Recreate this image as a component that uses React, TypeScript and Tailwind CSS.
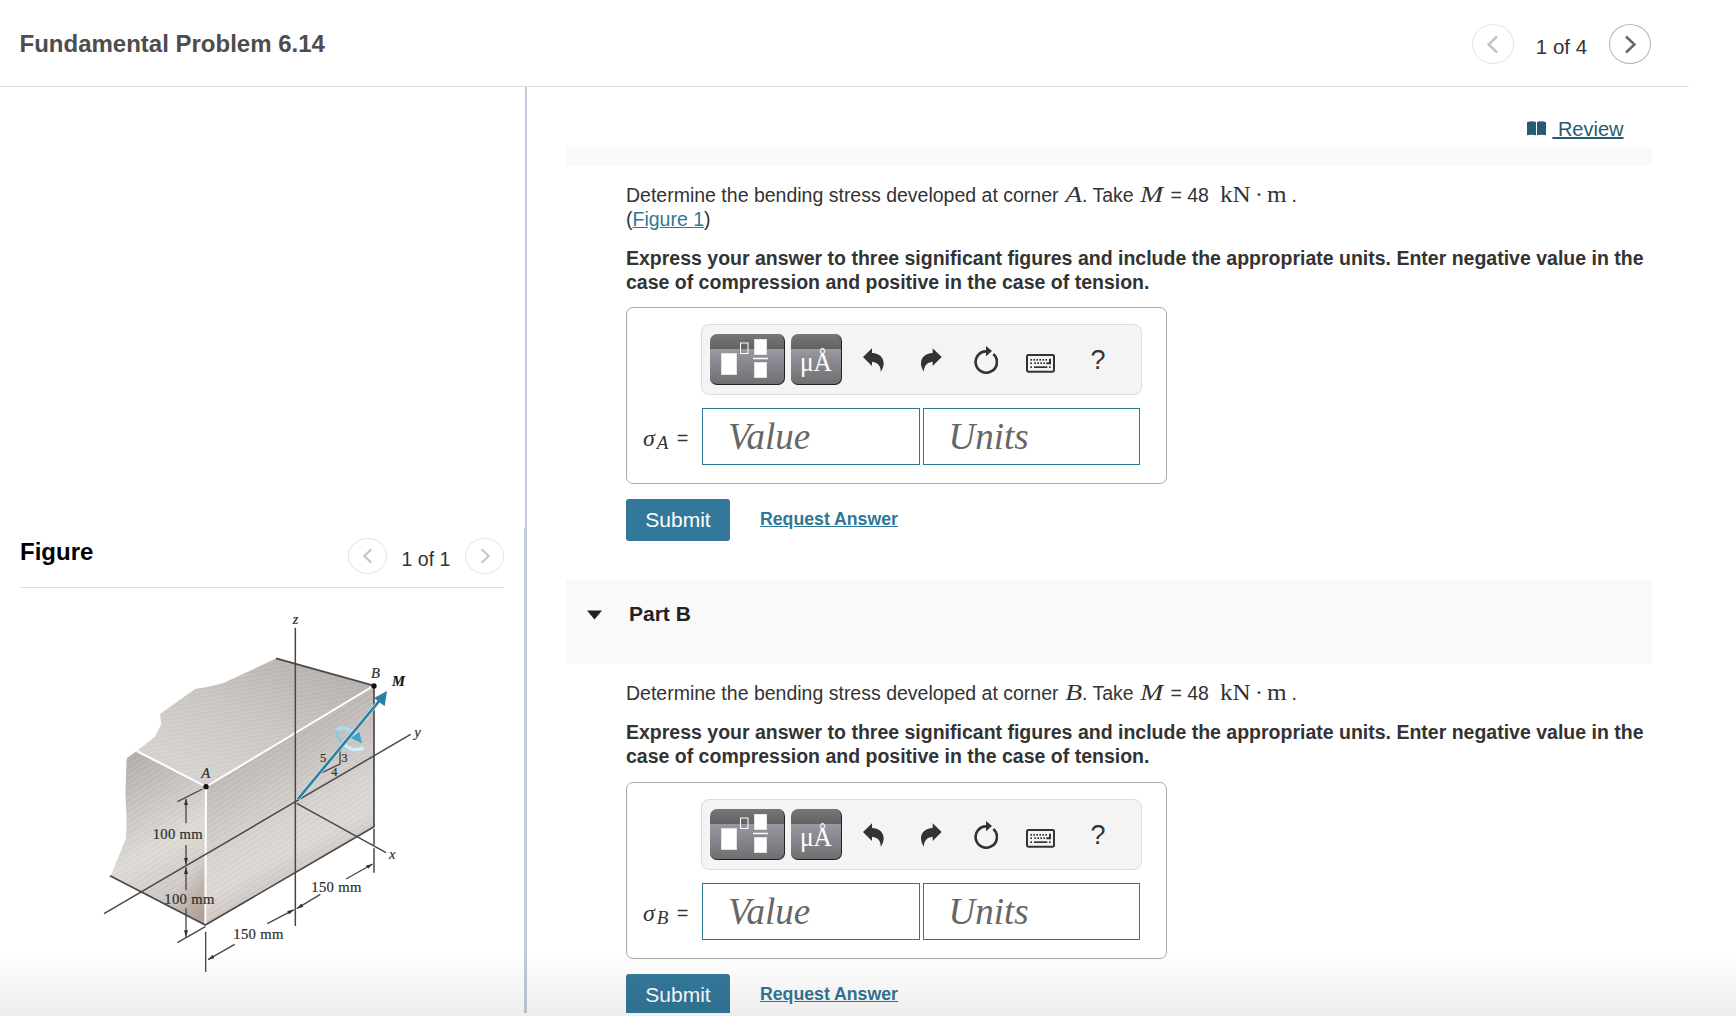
import { ReactNode } from 'react';

interface PartProps {
  corner: string;
  figureLink?: boolean;
}

interface PagerButtonProps {
  direction: 'prev' | 'next';
  active?: boolean;
  small?: boolean;
}

function PagerButton({ direction, active, small }: PagerButtonProps) {
  return (
    <button
      className={`flex items-center justify-center rounded-[50%] border ${
        small ? 'h-9 w-[39px]' : 'h-10 w-[42px]'
      } ${active ? 'border-[#b5b5b5] text-[#666]' : 'border-[#e6e6e6] text-[#c4c4c4]'}`}
    >
      <svg width={small ? 10 : 12} height={small ? 18 : 19} viewBox="0 0 12 19" fill="none" stroke="currentColor" strokeWidth="2.5">
        {direction === 'prev' ? <path d="M10 1.500 1.500 9.500l8.500 8" /> : <path d="M2 1.500 10.500 9.500l-8.500 8" />}
      </svg>
    </button>
  );
}

function MathText({ children, className = '' }: { children: ReactNode; className?: string }) {
  return (
    <span className={`inline-block font-['Liberation_Serif',serif] text-[24px] leading-[0] ${className}`}>{children}</span>
  );
}

function BookIcon() {
  return (
    <svg width="19" height="15" viewBox="0 0 19 15" fill="#255c71">
      <path d="M0 1.2C2.5-.1 6.500-.1 9 1v13.300c-2.500-.9-6.500-.9-9 0z" />
      <path d="M10 1c2.500-1.100 6.500-1.100 9 .2v13.100c-2.500-.9-6.500-.9-9 0z" />
    </svg>
  );
}

function UndoIcon() {
  return (
    <svg width="21" height="24" viewBox="0 0 63 72" fill="#333">
      <path d="M0 27 27 1v14c23 1 36 15 35 33-1 10-4 17-9 23 1-14-6-28-26-30v13z" />
    </svg>
  );
}

function RedoIcon() {
  return (
    <svg width="21" height="24" viewBox="0 0 63 72" fill="#333">
      <path d="M62 27 35 1v14C12 16-1 30 0 48c1 10 4 17 9 23-1-14 6-28 26-30v13z" />
    </svg>
  );
}

function ResetIcon() {
  return (
    <svg width="24" height="28" viewBox="0 0 72 84" fill="none">
      <path d="M58 24A32 32 0 1 1 36 16" stroke="#333" strokeWidth="8" />
      <path d="M36 0 54 15 36 31z" fill="#333" />
    </svg>
  );
}

function KeyboardIcon() {
  const keys = [
    [13, 15], [22, 15], [31, 15], [40, 15], [49, 15], [58, 15],
    [13, 25], [25, 25], [34, 25], [43, 25], [52, 25],
    [13, 37], [69, 37],
  ];
  return (
    <svg width="29" height="19" viewBox="0 0 87 57" fill="#333">
      <rect x="3" y="3" width="81" height="50" rx="4" fill="none" stroke="#333" strokeWidth="6" />
      {keys.map(([x, y]) => (
        <rect key={`${x}-${y}`} x={x} y={y} width="5" height="5" />
      ))}
      <path d="M69 14h6v17H61v-6h8z" />
      <rect x="24" y="37" width="40" height="5" />
    </svg>
  );
}

function TemplatesIcon() {
  return (
    <svg className="mt-px mr-1" width="48" height="41" viewBox="0 0 48 41" fill="none">
      <rect x="0.500" y="14.500" width="15" height="21" fill="#fff" stroke="#e2e2e2" />
      <rect x="19.500" y="4" width="7.500" height="10.500" stroke="#fff" />
      <rect x="33.500" y="0.500" width="12" height="15" fill="#fff" stroke="#e2e2e2" />
      <path d="M32 19.500h15" stroke="#fff" strokeWidth="1.500" />
      <rect x="33.500" y="23.500" width="12" height="15" fill="#fff" stroke="#e2e2e2" />
    </svg>
  );
}

const toolbarButton =
  'flex h-[51px] shrink-0 items-center justify-center rounded-[7px] border-r border-b border-[#222] bg-[linear-gradient(#777_0%,#636363_29%,#9a98a2_30%,#6f6f72_100%)]';

function Toolbar() {
  return (
    <div className="flex h-[71px] w-[441px] items-center rounded-lg border border-[#dcdcdc] bg-[#f4f4f4] pl-2">
      <button className={`${toolbarButton} mr-1.5 w-[75px]`}>
        <TemplatesIcon />
      </button>
      <button className={`${toolbarButton} w-[51px]`}>
        <span className="inline-block origin-bottom scale-y-110 pt-2 font-['Liberation_Serif',serif] text-[25.500px] leading-none text-white">
          μÅ
        </span>
      </button>
      <div className="ml-1 flex items-center">
        <span className="flex w-[55px] justify-center"><UndoIcon /></span>
        <span className="flex w-[61px] justify-center"><RedoIcon /></span>
        <span className="flex w-[47px] justify-center"><ResetIcon /></span>
        <span className="flex w-[63px] justify-center pt-[7px]"><KeyboardIcon /></span>
        <span className="flex w-[52px] justify-center pt-0.5 text-[27px] leading-none text-[#333]">?</span>
      </div>
    </div>
  );
}

function Part({ corner, figureLink }: PartProps) {
  return (
    <div className={`${figureLink ? 'pt-[16.500px]' : 'pt-[17px]'} pl-[60px] text-[19.500px] leading-6 text-[#333]`}>
      <p className="whitespace-nowrap">
        Determine the bending stress developed at corner{' '}
        <MathText className="w-[18px] origin-left scale-x-115 pl-px italic">{corner}</MathText>. Take{' '}
        <MathText className="w-[26px] origin-left scale-x-115 pl-px italic">M</MathText>{' '}= 48
        <MathText className="ml-[11px] w-[31px] origin-left scale-x-105">kN</MathText>
        <MathText className="mx-1">·</MathText>
        <MathText className="w-[19px] origin-left scale-x-105">m</MathText> .
      </p>
      {figureLink && (
        <p>
          (<a className="text-[#2f7796] underline">Figure 1</a>)
        </p>
      )}
      <p className="mt-[15px] font-bold whitespace-nowrap">
        Express your answer to three significant figures and include the appropriate units. Enter negative value in the
        <br />
        case of compression and positive in the case of tension.
      </p>

      {/* Answer box */}
      <div className={`${figureLink ? 'mt-[13.500px]' : 'mt-[14px]'} h-[177px] w-[541px] rounded-[7px] border border-[#a9a9a9] pt-4`}>
        <div className="ml-[74px]">
          <Toolbar />
        </div>
        <div className="mt-[13px] flex h-[57px] items-center">
          <div className="flex w-[75px] shrink-0 items-center pt-0.5 pl-4">
            <span className="font-['Liberation_Serif',serif] text-[24px] italic">σ</span>
            <span className="w-[22px] pt-2.5 pl-0.5 font-['Liberation_Serif',serif] text-[19px] italic">{corner}</span>
            <span className="text-[20px]">=</span>
          </div>
          <div className="flex h-[57px] w-[218px] items-center border border-[#2f7796] bg-white pl-[25px] font-['Liberation_Serif',serif] text-[37px] text-[#666] italic">
            Value
          </div>
          <div className="ml-[3px] flex h-[57px] w-[217px] items-center border border-[#2f7796] bg-white pl-[24.500px] font-['Liberation_Serif',serif] text-[37px] text-[#666] italic">
            Units
          </div>
        </div>
      </div>

      <div className="mt-[15px] flex h-[42px] items-center">
        <button className="h-[42px] w-[104px] rounded-[3px] bg-[#33789a] text-[21px] text-white">Submit</button>
        <a className="ml-[30px] pb-0.5 text-[17.700px] font-bold text-[#2f7796] underline">Request Answer</a>
      </div>
    </div>
  );
}

function BeamFigure() {
  return (
    <svg className="ml-20" width="380" height="400" viewBox="0 0 1140 1200" fill="none">
      <defs>
        <linearGradient id="top" x1="0.100" y1="0.700" x2="0.700" y2="0">
          <stop offset="0" stopColor="#d6d2ce" />
          <stop offset="0.500" stopColor="#cac5c0" />
          <stop offset="1" stopColor="#b8b2ae" />
        </linearGradient>
        <linearGradient id="side" x1="0.200" y1="0" x2="0.500" y2="1">
          <stop offset="0" stopColor="#b2aca7" />
          <stop offset="0.600" stopColor="#dedbd7" />
          <stop offset="1" stopColor="#c8bfba" />
        </linearGradient>
        <linearGradient id="front" gradientUnits="userSpaceOnUse" x1="520" y1="480" x2="720" y2="860">
          <stop offset="0" stopColor="#bdb6b2" />
          <stop offset="0.550" stopColor="#d8d4d0" />
          <stop offset="0.750" stopColor="#dcd8d4" />
          <stop offset="1" stopColor="#c9c0bb" />
        </linearGradient>
        <pattern id="grain" width="14" height="14" patternUnits="userSpaceOnUse" patternTransform="rotate(-32)">
          <path d="M0 3h14" stroke="#fff" strokeWidth="2" opacity="0.160" />
          <path d="M0 10h14" stroke="#8d8580" strokeWidth="2" opacity="0.100" />
        </pattern>
        <pattern id="topGrain" width="14" height="12" patternUnits="userSpaceOnUse" patternTransform="rotate(-10)">
          <path d="M0 3h14" stroke="#fff" strokeWidth="2" opacity="0.160" />
          <path d="M0 9h14" stroke="#8d8580" strokeWidth="2" opacity="0.100" />
        </pattern>
        <linearGradient id="shade" x1="1" y1="1" x2="0.300" y2="0.400">
          <stop offset="0" stopColor="#a08d84" stopOpacity="0.750" />
          <stop offset="0.700" stopColor="#a08d84" stopOpacity="0" />
        </linearGradient>
        <marker id="tick" viewBox="0 0 20 12" refX="20" refY="6" markerWidth="20" markerHeight="12" markerUnits="userSpaceOnUse" orient="auto-start-reverse">
          <path d="M0 0 20 6 0 12z" fill="#333" />
        </marker>
      </defs>

      {/* Block faces */}
      <path d="M170 483 225 440 244 402 240 372 345 297 385 290 432 278 590 205 882 287 378 590z" fill="url(#top)" />
      <path d="M170 483 225 440 244 402 240 372 345 297 385 290 432 278 590 205 882 287 378 590z" fill="url(#topGrain)" />
      <path d="M140 505 170 483 378 590 376 1005 92 857 138 745 140 690 136 610z" fill="url(#side)" />
      <path d="M140 505 170 483 378 590 376 1005 92 857 138 745 140 690 136 610z" fill="url(#grain)" />
      <path d="M376 790 376 1005 185 905z" fill="url(#shade)" />
      <path d="M378 590 882 287V710L376 1005z" fill="url(#front)" />
      <path d="M378 590 882 287V710L376 1005z" fill="url(#grain)" />
      <path d="M170 483 378 590 882 287M378 590 376 1005" stroke="#fff" strokeWidth="6" />
      <path d="M588 205 882 287V710L376 1005 90 857" stroke="#4a4747" strokeWidth="5" />

      {/* Axes */}
      <g stroke="#4a4747" strokeWidth="4.500">
        <path d="M646 113V1008" />
        <path d="M72 971 992 433" />
        <path d="M650 640 918 788" />
        <path d="M882 716V765M882 775V848" />
      </g>

      {/* Dimension lines */}
      <g stroke="#4a4747" strokeWidth="4">
        <path d="M292 635 368 597" />
        <path d="M318 700V626" markerEnd="url(#tick)" />
        <path d="M318 765V824" markerEnd="url(#tick)" />
        <path d="M318 900V832" markerEnd="url(#tick)" />
        <path d="M318 955V1041" markerEnd="url(#tick)" />
        <path d="M292 1058 376 1010" />
        <path d="M377 1025V1146" />
        <path d="M464 1063 384 1109" markerEnd="url(#tick)" />
        <path d="M562 1001 642 959" markerEnd="url(#tick)" />
        <path d="M721 913 650 956" markerEnd="url(#tick)" />
        <path d="M798 867 878 822" markerEnd="url(#tick)" />
      </g>

      {/* Slope triangle */}
      <path d="M726 548 780 522V480" stroke="#4a4747" strokeWidth="4" />

      {/* Moment vector with its curl */}
      <path d="M772 424C772 444 786 464 806 476" stroke="#7fcbea" strokeWidth="8" />
      <path d="M771 422C780 408 808 414 830 436" stroke="#a9dcf1" strokeWidth="11" />
      <path d="M790 460C806 478 828 484 850 473" stroke="#cdeefa" strokeWidth="10" />
      <path d="M846 460 812 444 838 426z" fill="#3fa4cc" />
      <path d="M654 627 900 330" stroke="#d9e6ea" strokeWidth="12" />
      <path d="M654 627 900 330" stroke="#2b80a8" strokeWidth="8" />
      <path d="M921 303 914 349 882 324z" fill="#2b80a8" />

      <circle cx="378" cy="590" r="8" fill="#111" />
      <circle cx="882" cy="288" r="8" fill="#111" />

      <g fill="#2e2e2e" stroke="#2e2e2e" strokeWidth="0.600" fontFamily="'Liberation Serif', serif" fontSize="44">
        <g fontStyle="italic">
          <text x="638" y="102" fontSize="42">z</text>
          <text x="873" y="265">B</text>
          <text x="936" y="288" fontWeight="bold" fill="#111">M</text>
          <text x="1003" y="442">y</text>
          <text x="927" y="806">x</text>
          <text x="364" y="564">A</text>
        </g>
        <text x="720" y="517" fontSize="38">5</text>
        <text x="784" y="515" fontSize="38">3</text>
        <text x="754" y="558" fontSize="38">4</text>
        <text x="218" y="747" textLength="150">100 mm</text>
        <text x="253" y="941" textLength="150">100 mm</text>
        <text x="694" y="905" textLength="150">150 mm</text>
        <text x="460" y="1048" textLength="150">150 mm</text>
      </g>
    </svg>
  );
}

export default function App() {
  return (
    <div className="relative h-[1016px] w-[1736px] overflow-hidden bg-white font-['Liberation_Sans',Arial,sans-serif] text-[#333]">
      <header className="flex h-[87px] w-[1689px] items-start border-b border-[#dedede] pl-[19.500px]">
        <h1 className="pt-[30px] text-2xl leading-7 font-bold text-[#4d4d4d]">Fundamental Problem 6.14</h1>
        <div className="mt-6 mr-[38px] ml-auto flex items-center">
          <PagerButton direction="prev" />
          <span className="w-[95px] pt-[5px] text-center text-[20.500px] leading-6">1 of 4</span>
          <PagerButton direction="next" active />
        </div>
      </header>

      <div className="flex h-[926px] overflow-hidden">
        {/* Figure column */}
        <aside className="flex w-[527px] shrink-0 flex-col">
          <div className="h-[441px] border-r-2 border-[#bfcbdc]" />
          <div className="h-[485px] border-r-3 border-[#bfcbdc] pl-5">
            <div className="flex h-[60px] w-[484px] items-start justify-between border-b border-[#dedede]">
              <h2 className="pt-[10px] text-2xl leading-7 font-bold text-black">Figure</h2>
              <div className="mt-[10px] flex items-center">
                <PagerButton direction="prev" small />
                <span className="w-[78px] pt-1.5 text-center text-[19.500px] leading-6">1 of 1</span>
                <PagerButton direction="next" small />
              </div>
            </div>
            <div className="-ml-5 pt-0.5">
              <BeamFigure />
            </div>
          </div>
        </aside>

        {/* Question column */}
        <main className="ml-[39px] w-[1086px] shrink-0">
          <div className="flex h-[60px] items-start justify-end pt-[30px] pr-[28.500px] text-[#255c71]">
            <span className="pt-1"><BookIcon /></span>
            <a className="ml-1.5 text-xl leading-6 whitespace-pre underline"> Review</a>
          </div>
          <div className="h-[19px] bg-[#f9f9f9]" />
          <Part corner="A" figureLink />

          <div className="mt-[39px] flex h-[84px] items-start bg-[#f9f9f9] pt-[22px] pl-[21px]">
            <svg className="mt-2" width="15" height="10" viewBox="0 0 15 10" fill="#222">
              <path d="M0 .5h15L7.500 9.500z" />
            </svg>
            <h2 className="ml-[27px] text-[21px] leading-6 font-bold text-[#222]">Part B</h2>
          </div>
          <Part corner="B" />
        </main>
      </div>

      {/* Fade along the bottom edge */}
      <div className="pointer-events-none absolute inset-x-0 bottom-0 h-16 bg-linear-to-b from-transparent to-black/7" />
    </div>
  );
}
